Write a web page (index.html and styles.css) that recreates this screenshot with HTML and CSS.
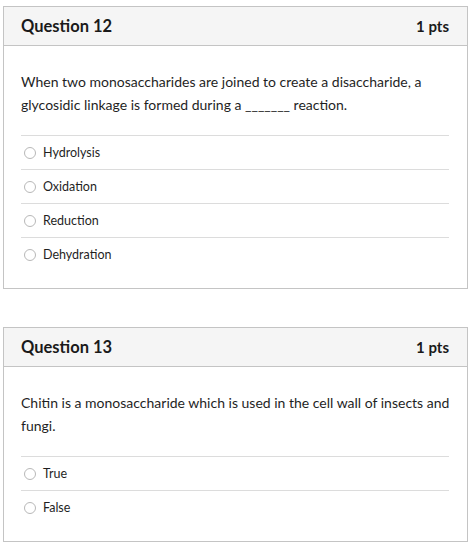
FILE: index.html
```html
<!DOCTYPE html>
<html>
<head>
<meta charset="utf-8">
<link rel="stylesheet" href="styles.css">
</head>
<body>
<div class="page">
  <section class="card">
    <header class="card-head">
      <h2 class="q-title">Question 12</h2>
      <span class="q-pts">1 pts</span>
    </header>
    <div class="card-body">
      <p class="q-text">When two monosaccharides are joined to create a disaccharide, a glycosidic linkage is formed during a _______ reaction.</p>
      <ul class="answers">
        <li class="answer"><span class="radio"></span><span class="label">Hydrolysis</span></li>
        <li class="answer"><span class="radio"></span><span class="label">Oxidation</span></li>
        <li class="answer"><span class="radio"></span><span class="label">Reduction</span></li>
        <li class="answer"><span class="radio"></span><span class="label">Dehydration</span></li>
      </ul>
    </div>
  </section>
  <section class="card">
    <header class="card-head">
      <h2 class="q-title">Question 13</h2>
      <span class="q-pts">1 pts</span>
    </header>
    <div class="card-body">
      <p class="q-text">Chitin is a monosaccharide which is used in the cell wall of insects and fungi.</p>
      <ul class="answers">
        <li class="answer"><span class="radio"></span><span class="label">True</span></li>
        <li class="answer"><span class="radio"></span><span class="label">False</span></li>
      </ul>
    </div>
  </section>
</div>
</body>
</html>
```
FILE: styles.css
```css
html, body {
  margin: 0;
  padding: 0;
  background: #fff;
}
body {
  font-family: Lato, "Open Sans", sans-serif;
  color: #1f1f1f;
}
.page {
  padding: 6px 0 0 3px;
  display: flex;
  flex-direction: column;
  gap: 38px;
  width: 465px;
}
.card {
  border: 1px solid #c4c4c4;
  background: #fff;
}
.card-head {
  background: #f5f5f5;
  border-bottom: 1px solid #c4c4c4;
  height: 38px;
  display: flex;
  align-items: center;
  justify-content: space-between;
  padding: 0 18px 0 17px;
}
.q-title {
  margin: 0;
  font-size: 16.5px;
  font-weight: 700;
  color: #1a1a1a;
}
.q-pts {
  font-size: 15px;
  font-weight: 700;
  color: #1a1a1a;
}
.card-body {
  padding: 24px 18px 17px 17px;
}
.q-text {
  margin: 0 -6px 19px 0;
  font-size: 14px;
  line-height: 23px;
}
.answers {
  list-style: none;
  margin: 0;
  padding: 0;
}
.answer {
  border-top: 1px solid #dcdcdc;
  height: 33px;
  display: flex;
  align-items: center;
  padding-left: 3px;
}
.radio {
  width: 10px;
  height: 10px;
  border: 1px solid #b8b8b8;
  border-radius: 50%;
  background: #fff;
  margin-right: 7px;
}
.label {
  font-size: 12.5px;
}
```
